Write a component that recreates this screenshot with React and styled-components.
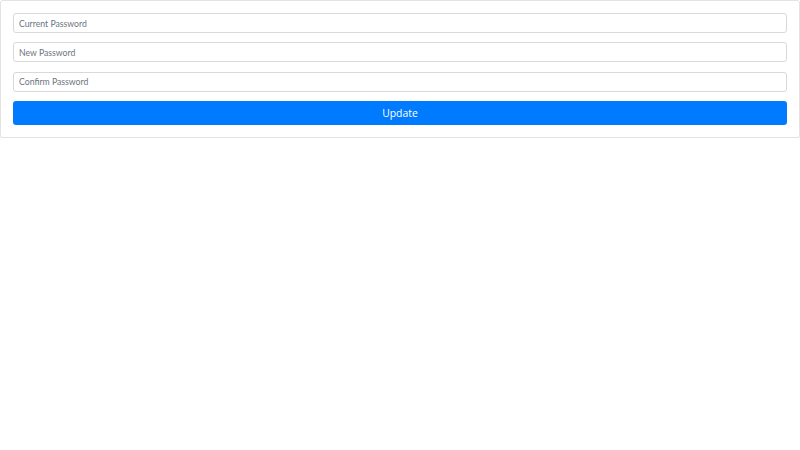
import React from "react";
import styled, { createGlobalStyle } from "styled-components";

const GlobalStyle = createGlobalStyle`
  html, body {
    margin: 0;
    background: #ffffff;
    font-family: Lato, "Open Sans", sans-serif;
  }
`;

const App = () => {
  return (
    <>
      <GlobalStyle />
      <Card>
        <Form onSubmit={(e) => e.preventDefault()}>
          <Field type="password" placeholder="Current Password" />
          <Field type="password" placeholder="New Password" />
          <Field type="password" placeholder="Confirm Password" />
          <UpdateButton type="submit">Update</UpdateButton>
        </Form>
      </Card>
    </>
  );
};

const Card = styled.div`
  box-sizing: border-box;
  width: 800px;
  background: #ffffff;
  border: 1px solid #e3e3e3;
  border-radius: 3px;
  box-shadow: 0 1px 3px rgba(0, 0, 0, 0.08);
  padding: 12px;
`;

const Form = styled.form`
  display: flex;
  flex-direction: column;
  gap: 9.34px;
`;

const Field = styled.input`
  box-sizing: border-box;
  height: 20px;
  width: 100%;
  margin: 0;
  padding: 0 5px;
  border: 1px solid #d9d9d9;
  border-radius: 3px;
  font-family: Lato, "Open Sans", sans-serif;
  font-size: 8.7px;
  color: #495057;
  outline: none;

  &::placeholder {
    color: #6c757d;
  }
`;

const UpdateButton = styled.button`
  box-sizing: border-box;
  height: 24px;
  width: 100%;
  margin: 0;
  border: none;
  border-radius: 3px;
  background: #007bff;
  color: #ffffff;
  font-family: "Open Sans", Lato, sans-serif;
  font-size: 10.4px;
  cursor: pointer;
`;

export default App;
